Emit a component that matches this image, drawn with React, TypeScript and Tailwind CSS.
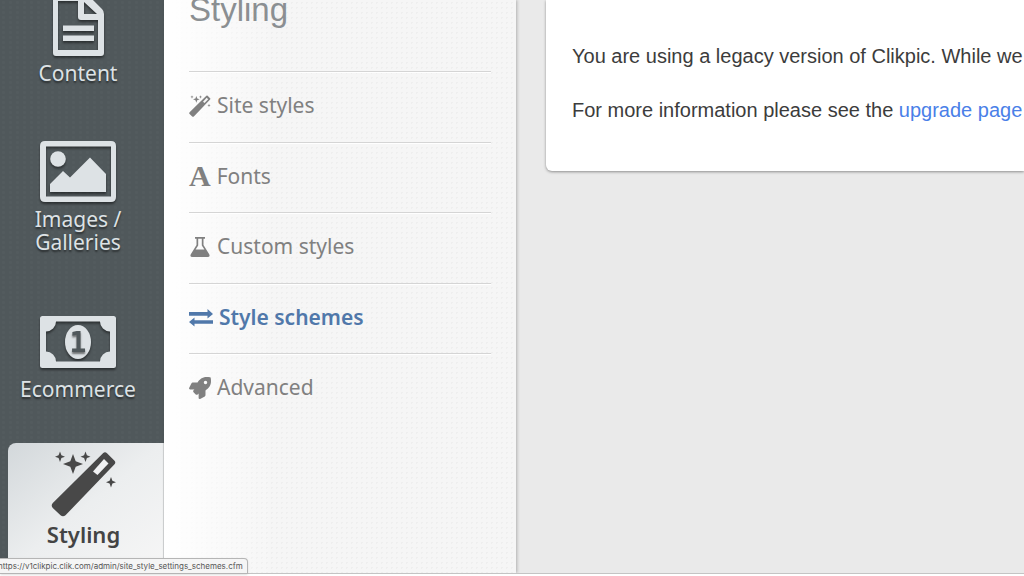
import React from 'react';
import { FaRocket } from 'react-icons/fa';

interface NavItem {
  label: string;
  icon: React.ReactNode;
  className: string;
}

interface MenuItem {
  label: string;
  icon: React.ReactNode;
  active?: boolean;
}

function WandIcon({ className, inset }: { className: string; inset: string }) {
  return (
    <svg viewBox="0 0 66 66" className={className} fill="currentColor" aria-hidden="true">
      <path d="M52 2.2q2-2 4 0l7.3 7.3q2 2 0 4L14.5 64.3q-2.5 2-5 0L1.8 57q-2.2-2.500 0-5z" />
      <path d="M42 20.5 53 8l4.5 4.5L46.5 24z" fill={inset} />
      <path d="M22 3l2.7 7.3L32 13l-7.3 2.7L22 23l-2.7-7.3L12 13l7.3-2.7z" />
      <path d="M9 .5l1.4 3.8L14 5.7l-3.6 1.4L9 11 7.6 7.1 4 5.7l3.6-1.4z" />
      <path d="M34.5.5l1.4 3.8 3.6 1.4-3.6 1.4-1.4 3.9-1.4-3.9-3.6-1.400 3.6-1.4z" />
      <path d="M60 26l1.4 3.8 3.6 1.4-3.6 1.4L60 36.5l-1.4-3.9-3.6-1.400 3.6-1.4z" />
    </svg>
  );
}

function FileIcon() {
  return (
    <svg viewBox="0 0 51 60" className="h-[60px] w-[51px] drop-shadow-[0_2px_1px_rgba(0,0,0,0.45)]" fill="currentColor" aria-hidden="true">
      <path fillRule="evenodd" d="M3 0h30q3 0 5 2l11 11q2 2 2 5v39q0 3-3 3H3q-3 0-3-3V3q0-3 3-3zm2 5v49h40V24H28q-3 0-3-3V5zm26 1v12h13z" />
      <path d="M10 29.5h31V35H10zM10 39.5h31V45H10z" />
    </svg>
  );
}

function PictureIcon() {
  return (
    <svg viewBox="0 0 76 61" className="h-[61px] w-[76px] drop-shadow-[0_2px_1px_rgba(0,0,0,0.45)]" fill="currentColor" aria-hidden="true">
      <path fillRule="evenodd" d="M5 0h66q5 0 5 5v51q0 5-5 5H5q-5 0-5-5V5q0-5 5-5zm1 5.500v50h65v-50z" />
      <circle cx="18" cy="18" r="7.8" />
      <path d="M10 43l13-13 7 6.5L50 16.5 66 33v18H10z" />
    </svg>
  );
}

function MoneyIcon() {
  return (
    <svg viewBox="0 0 76 52" className="h-[52px] w-[76px] drop-shadow-[0_2px_1px_rgba(0,0,0,0.45)]" fill="currentColor" aria-hidden="true">
      <path fillRule="evenodd" d="M2.5 0h71Q76 0 76 2.5v47q0 2.500-2.500 2.500h-71Q0 52 0 49.500v-47Q0 0 2.500 0zM16 5.500A10 10 0 0 1 6 15.500v20a10 10 0 0 1 10 10h44a10 10 0 0 1 10-10v-20a10 10 0 0 1-10-10z" />
      <ellipse cx="38" cy="26" rx="13" ry="17" />
      <text x="38" y="36" textAnchor="middle" fontFamily="DejaVu Sans Mono, monospace" fontWeight="700" fontSize="28" fill="#50585b">1</text>
    </svg>
  );
}

function FlaskIcon() {
  return (
    <svg viewBox="0 0 22 22" className="h-[22px] w-[22px]" fill="currentColor" aria-hidden="true">
      <path fillRule="evenodd" d="M6 1h10v1.800h-1.500V9l5.700 9.200Q21.500 21 18.500 21h-15Q.5 21 1.800 18.200L7.500 9V2.800H6zm3.200 1.800v6.700L6.600 13.500h8.800L12.800 9.500V2.800z" />
    </svg>
  );
}

function ExchangeIcon() {
  return (
    <svg viewBox="0 0 24 18" className="h-[18px] w-6" fill="currentColor" aria-hidden="true">
      <path d="M0 3h18.500V0L24 5l-5.500 4.500V6.700H0zM24 11.200H5.500V8.500L0 13l5.500 4.500v-2.700H24z" />
    </svg>
  );
}

const navItems: NavItem[] = [
  { label: 'Content', icon: <FileIcon />, className: 'h-[145px] gap-1.5' },
  { label: 'Images / Galleries', icon: <PictureIcon />, className: 'h-[175px] gap-1.5' },
  { label: 'Ecommerce', icon: <MoneyIcon />, className: 'h-[127px] gap-2.5' },
];

const menuItems: MenuItem[] = [
  { label: 'Site styles', icon: <WandIcon className="h-[22px] w-[22px]" inset="#f7f7f7" /> },
  { label: 'Fonts', icon: <span className="font-['Liberation_Serif',serif] text-[30px] leading-6 font-bold" aria-hidden="true">A</span> },
  { label: 'Custom styles', icon: <FlaskIcon /> },
  { label: 'Style schemes', icon: <ExchangeIcon />, active: true },
  { label: 'Advanced', icon: <FaRocket className="h-[22px] w-[22px]" aria-hidden="true" /> },
];

function Sidebar() {
  return (
    <nav className="w-[164px] shrink-0 overflow-hidden bg-[#50585b] bg-[radial-gradient(circle,#535b5e_1px,transparent_2px)] bg-size-[7px_5px]">
      <div className="-mt-1 flex h-full flex-col">
        {navItems.map(item => (
          <a
            key={item.label}
            href="#"
            className={`flex shrink-0 flex-col items-center pr-6 pl-4 text-center text-[21px] leading-[23px] text-[#dde2e5] [text-shadow:0_2px_2px_rgba(0,0,0,0.5)] ${item.className}`}
          >
            {item.icon}
            <span>{item.label}</span>
          </a>
        ))}
        <a
          href="#"
          aria-current="page"
          className="ml-2 flex h-32 shrink-0 flex-col items-center gap-1.5 rounded-tl-lg border-r border-[#d5d7d8] bg-linear-to-br from-[#d3d8db] via-[#eceeef] via-50% to-[#f6f6f6] pt-2 pr-1 text-[22px] leading-[23px] font-semibold text-[#444]"
        >
          <WandIcon className="h-[66px] w-[66px] text-[#484848]" inset="#f0f1f2" />
          <span>Styling</span>
        </a>
      </div>
    </nav>
  );
}

function StylingMenu() {
  return (
    <aside className="z-10 w-[352px] shrink-0 bg-[#f6f6f6] bg-[linear-gradient(to_right,#fff,transparent_110px),radial-gradient(circle,#efefef_1px,transparent_1px)] bg-size-[100%_100%,5px_5px] px-[25px] shadow-[1px_0_3px_rgba(0,0,0,0.25)]">
      <h1 className="-mt-2.5 mb-[41px] font-['Liberation_Sans',sans-serif] text-[33px] leading-10 text-[#8b8f92]">Styling</h1>
      <ul className="grid h-[353px] auto-rows-fr">
        {menuItems.map(item => (
          <li key={item.label} className="border-t border-[#d5d5d5] shadow-[inset_0_1px_0_#fff]">
            <a
              href="#"
              className={`flex h-full items-center gap-1.5 pb-0.5 text-[21px] ${
                item.active ? 'font-semibold text-[#5078aa]' : 'text-[#808080]'
              }`}
            >
              {item.icon}
              <span>{item.label}</span>
            </a>
          </li>
        ))}
      </ul>
    </aside>
  );
}

export default function App() {
  return (
    <div className="relative h-screen overflow-hidden bg-white pb-0.5 font-['Noto_Sans','Open_Sans',sans-serif]">
      <div className="flex h-full overflow-hidden border-b border-[#c4c4c4] bg-[#eaeaea]">
        <Sidebar />
        <StylingMenu />
        <main className="min-w-0 flex-1 overflow-hidden pl-[30px]">
          <section className="rounded-bl-md bg-white pt-10 pb-[45px] pl-[26px] font-['Liberation_Sans',sans-serif] text-xl leading-8 whitespace-nowrap text-[#3c3c3c] shadow-[0_1px_3px_rgba(0,0,0,0.4)]">
            <p className="mb-[22px]">You are using a legacy version of Clikpic. While we</p>
            <p>
              For more information please see the{' '}
              <a href="#" className="text-[#4a7fe8]">upgrade page</a>
            </p>
          </section>
        </main>
      </div>

      {/* Link preview shown by the browser */}
      <div className="absolute bottom-0.5 left-0 z-20 flex h-4 items-center rounded-tr-sm border border-l-0 border-[#b5b5b5] bg-[#f5f5f5] pr-1 font-['Inter','Liberation_Sans',sans-serif] text-[8px] text-[#555] shadow-sm">
        <span className="-ml-0.5">https://v1clikpic.clik.com/admin/site_style_settings_schemes.cfm</span>
      </div>
    </div>
  );
}
